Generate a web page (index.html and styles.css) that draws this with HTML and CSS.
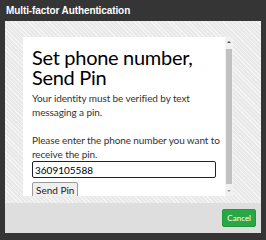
FILE: index.html
```html
<!DOCTYPE html>
<html>
<head>
<meta charset="utf-8">
<link rel="stylesheet" href="styles.css">
</head>
<body>
<div class="modal">
  <div class="modal-title">Multi-factor Authentication</div>
  <div class="modal-body">
    <div class="frame">
      <div class="frame-content">
        <h1 class="heading">Set phone number, Send Pin</h1>
        <p class="text first">Your identity must be verified by text messaging a pin.</p>
        <p class="text second">Please enter the phone number you want to receive the pin.</p>
        <input class="phone" type="text" value="3609105588">
        <div><button class="send">Send Pin</button></div>
      </div>
      <div class="scrollbar">
        <div class="arrow up"></div>
        <div class="thumb"></div>
        <div class="arrow down"></div>
      </div>
    </div>
  </div>
  <div class="modal-footer">
    <button class="cancel">Cancel</button>
  </div>
</div>
</body>
</html>
```

FILE: styles.css
```css
html, body {
  margin: 0;
  padding: 0;
}
body {
  background: #353535;
  width: 266px;
  height: 240px;
  overflow: hidden;
  font-family: "Lato", sans-serif;
}
.modal {
  display: flex;
  flex-direction: column;
  height: 233px;
}
.modal-title {
  height: 21px;
  padding: 5px 0 0 6px;
  box-sizing: border-box;
  color: #fff;
  font-family: "Liberation Sans", sans-serif;
  font-weight: bold;
  font-size: 10px;
  line-height: 12px;
  letter-spacing: -0.1px;
}
.modal-body {
  margin: 0 5px;
  padding: 16px 28px 7px 18px;
  background-color: #e9e9e9;
  background-image: repeating-linear-gradient(45deg, rgba(255,255,255,0.5) 0 1px, transparent 1px 3px);
}
.frame {
  display: flex;
  background: #fff;
  height: 159px;
}
.frame-content {
  flex: 1;
  padding: 10px 0 0 9px;
  overflow: hidden;
}
.heading {
  margin: 0;
  font-family: "Lato", sans-serif;
  font-weight: normal;
  font-size: 20px;
  line-height: 20px;
  letter-spacing: -0.3px;
  color: #000;
}
.text {
  margin: 0;
  font-family: "Lato", sans-serif;
  font-size: 10px;
  line-height: 14px;
  letter-spacing: -0.1px;
  color: #333;
}
.text.first {
  margin-top: 4px;
}
.text.second {
  margin-top: 14px;
}
.phone {
  display: block;
  box-sizing: border-box;
  width: 184px;
  height: 17px;
  margin: 0;
  padding: 0 2px;
  border: 1px solid #222;
  border-radius: 2px;
  font-family: "Lato", sans-serif;
  font-size: 10px;
  color: #000;
  outline: none;
}
.send {
  margin: 1px 0 0;
  height: 17px;
  padding: 0 3px;
  background: #efefef;
  border: 1px solid #9a9a9a;
  border-radius: 2px;
  font-family: "Lato", sans-serif;
  font-size: 10px;
  color: #222;
}
.scrollbar {
  width: 8px;
  background: #f1f1f1;
  display: flex;
  flex-direction: column;
  align-items: center;
}
.arrow {
  width: 0;
  height: 0;
  border-left: 2px solid transparent;
  border-right: 2px solid transparent;
  margin: 4px 0;
}
.arrow.up {
  border-bottom: 2px solid #505050;
}
.arrow.down {
  border-top: 2px solid #a0a0a0;
}
.thumb {
  flex: 1;
  width: 6px;
  background: #c1c1c1;
  margin: 2px 0;
}
.modal-footer {
  margin: 0 5px;
  height: 30px;
  background: #dedede;
  display: flex;
  justify-content: flex-end;
  align-items: center;
  padding-right: 5px;
}
.cancel {
  height: 18px;
  padding: 0 4px;
  background: #28a745;
  border: 1px solid #24963e;
  border-radius: 2px;
  color: #fff;
  font-family: "Lato", sans-serif;
  font-size: 8px;
}
```
